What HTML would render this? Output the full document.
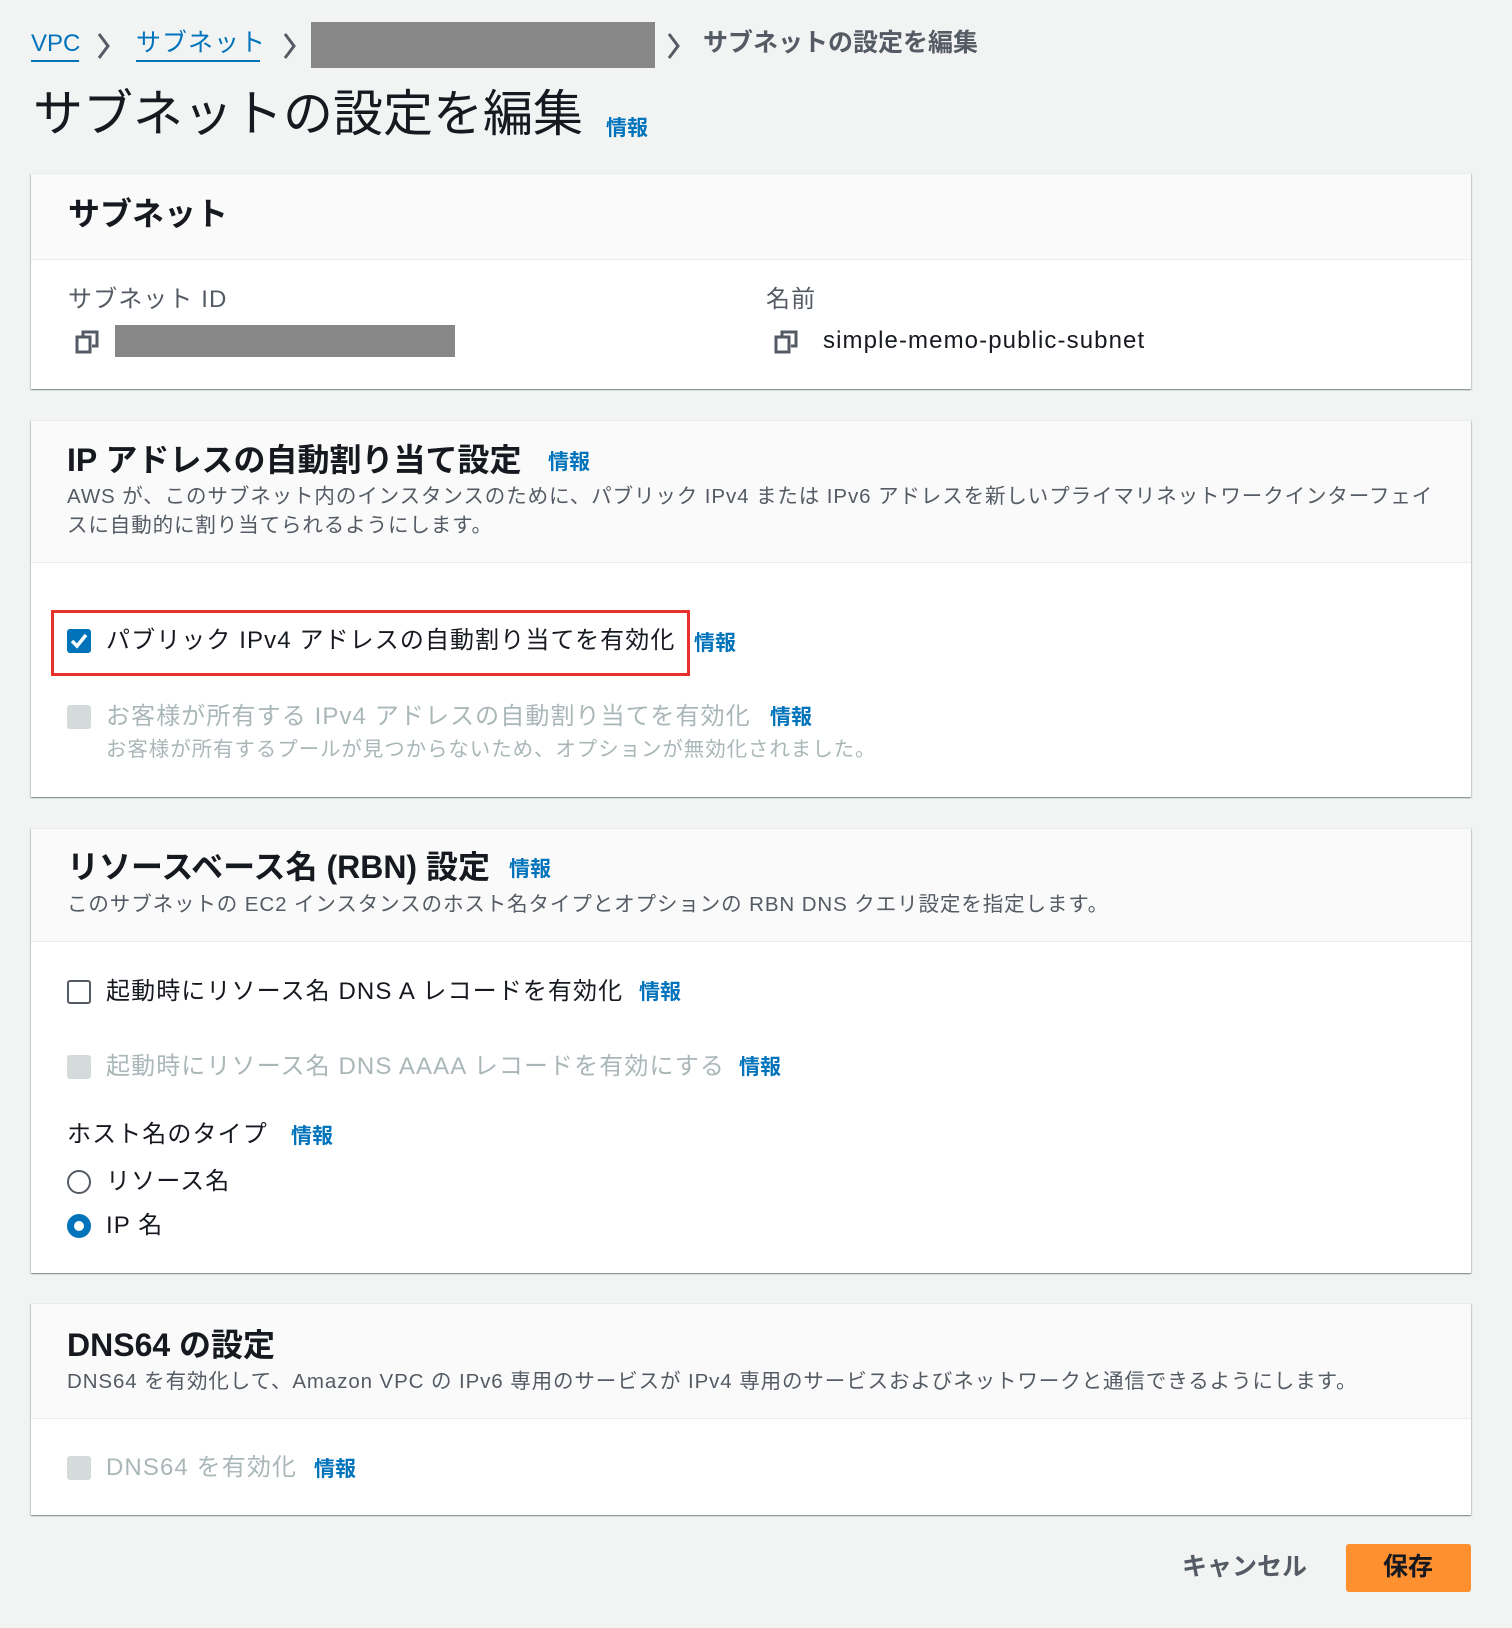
<!DOCTYPE html>
<html><head><meta charset="utf-8"><style>
*{margin:0;padding:0;box-sizing:border-box}
body{width:1512px;height:1628px;background:#f2f3f3;position:relative;overflow:hidden;font-family:"Liberation Sans","Noto Sans CJK JP",sans-serif;color:#16191f}
.t{position:absolute;white-space:nowrap;line-height:1}
.lk{color:#0073bb;font-weight:bold;font-size:21px}
.panel{position:absolute;left:31px;width:1440px;background:#fff;box-shadow:0 1px 1px 0 rgba(0,28,36,.3),1px 1px 1px 0 rgba(0,28,36,.15),-1px 1px 1px 0 rgba(0,28,36,.15);border-top:1px solid #eaeded}
.hd{position:absolute;left:0;top:0;width:100%;background:#fafafa;border-bottom:1px solid #eaeded}
.cb{position:absolute;width:24px;height:24px;border-radius:3px}
.h2{font-size:32px;font-weight:bold}
.desc{font-size:20.5px;color:#545b64;letter-spacing:0.9px}
.b{font-size:24px;letter-spacing:1.1px}
.dis{color:#aab7b8}
.gray{position:absolute;background:#878787}
</style></head><body>
<div class="t" style="left:31px;top:32px;font-size:24px;color:#0073bb">VPC</div>
<div style="position:absolute;left:31px;top:60px;width:48px;height:2px;background:#0073bb"></div>
<svg style="position:absolute;left:96px;top:31px" width="16" height="30"><path d="M3 3 L12 15 L3 27" stroke="#545b64" stroke-width="3" fill="none"/></svg>
<div class="t" style="left:136px;top:31px;font-size:25px;color:#0073bb;letter-spacing:1px">サブネット</div>
<div style="position:absolute;left:136px;top:60px;width:124px;height:2px;background:#0073bb"></div>
<svg style="position:absolute;left:282px;top:31px" width="16" height="30"><path d="M3 3 L12 15 L3 27" stroke="#545b64" stroke-width="3" fill="none"/></svg>
<div class="gray" style="left:311px;top:22px;width:344px;height:46px"></div>
<svg style="position:absolute;left:666px;top:31px" width="16" height="30"><path d="M3 3 L12 15 L3 27" stroke="#545b64" stroke-width="3" fill="none"/></svg>
<div class="t" style="left:703px;top:31px;font-size:25px;color:#545b64;font-weight:bold">サブネットの設定を編集</div>
<div class="t" style="left:33px;top:89px;font-size:50px">サブネットの設定を編集</div>
<div class="t lk" style="left:606px;top:118px">情報</div>

<div class="panel" style="top:173px;height:216px">
 <div class="hd" style="height:86px"></div>
 <div class="t" style="left:37px;top:24px;font-size:32px;font-weight:bold">サブネット</div>
 <div class="t b" style="left:37px;top:114px;color:#545b64">サブネット ID</div>
 <svg style="position:absolute;left:44px;top:155px" width="26" height="26"><rect x="2" y="8" width="13" height="15" fill="none" stroke="#545b64" stroke-width="3"/><path d="M8 7 V3 H22 V17 H17" fill="none" stroke="#545b64" stroke-width="3"/></svg>
 <div class="gray" style="left:84px;top:151px;width:340px;height:32px"></div>
 <div class="t b" style="left:735px;top:114px;color:#545b64">名前</div>
 <svg style="position:absolute;left:743px;top:155px" width="26" height="26"><rect x="2" y="8" width="13" height="15" fill="none" stroke="#545b64" stroke-width="3"/><path d="M8 7 V3 H22 V17 H17" fill="none" stroke="#545b64" stroke-width="3"/></svg>
 <div class="t b" style="left:792px;top:155px">simple-memo-public-subnet</div>
</div>

<div class="panel" style="top:420px;height:377px">
 <div class="hd" style="height:142px"></div>
 <div class="t h2" style="left:36px;top:23px">IP アドレスの自動割り当て設定</div>
 <div class="t lk" style="left:517px;top:31px">情報</div>
 <div class="t desc" style="left:36px;top:66px">AWS が、このサブネット内のインスタンスのために、パブリック IPv4 または IPv6 アドレスを新しいプライマリネットワークインターフェイ</div>
 <div class="t desc" style="left:36px;top:95px">スに自動的に割り当てられるようにします。</div>
 <div style="position:absolute;left:20px;top:189px;width:639px;height:66px;border:3px solid #e8312a"></div>
 <div class="cb" style="left:36px;top:208px;background:#0073bb"><svg width="24" height="24"><path d="M5 12 L10 17 L19 6" stroke="#fff" stroke-width="3.5" fill="none"/></svg></div>
 <div class="t b" style="left:75px;top:208px">パブリック IPv4 アドレスの自動割り当てを有効化</div>
 <div class="t lk" style="left:663px;top:212px">情報</div>
 <div class="cb" style="left:36px;top:284px;background:#d5dbdb"></div>
 <div class="t b dis" style="left:75px;top:284px">お客様が所有する IPv4 アドレスの自動割り当てを有効化</div>
 <div class="t lk" style="left:739px;top:286px">情報</div>
 <div class="t dis" style="left:75px;top:319px;font-size:20.5px;letter-spacing:0.9px">お客様が所有するプールが見つからないため、オプションが無効化されました。</div>
</div>

<div class="panel" style="top:828px;height:445px">
 <div class="hd" style="height:113px"></div>
 <div class="t h2" style="left:36px;top:22px">リソースベース名 (RBN) 設定</div>
 <div class="t lk" style="left:478px;top:30px">情報</div>
 <div class="t desc" style="left:36px;top:66px">このサブネットの EC2 インスタンスのホスト名タイプとオプションの RBN DNS クエリ設定を指定します。</div>
 <div class="cb" style="left:36px;top:151px;border:2px solid #545b64"></div>
 <div class="t b" style="left:75px;top:151px">起動時にリソース名 DNS A レコードを有効化</div>
 <div class="t lk" style="left:608px;top:153px">情報</div>
 <div class="cb" style="left:36px;top:226px;background:#d5dbdb"></div>
 <div class="t b dis" style="left:75px;top:226px">起動時にリソース名 DNS AAAA レコードを有効にする</div>
 <div class="t lk" style="left:708px;top:228px">情報</div>
 <div class="t b" style="left:36px;top:294px">ホスト名のタイプ</div>
 <div class="t lk" style="left:260px;top:297px">情報</div>
 <div style="position:absolute;left:36px;top:341px;width:24px;height:24px;border:2px solid #545b64;border-radius:50%"></div>
 <div class="t b" style="left:75px;top:341px">リソース名</div>
 <div style="position:absolute;left:36px;top:385px;width:24px;height:24px;border:7px solid #0073bb;border-radius:50%"></div>
 <div class="t b" style="left:75px;top:385px">IP 名</div>
</div>

<div class="panel" style="top:1303px;height:212px">
 <div class="hd" style="height:115px"></div>
 <div class="t h2" style="left:36px;top:25px">DNS64 の設定</div>
 <div class="t desc" style="left:36px;top:68px">DNS64 を有効化して、Amazon VPC の IPv6 専用のサービスが IPv4 専用のサービスおよびネットワークと通信できるようにします。</div>
 <div class="cb" style="left:36px;top:152px;background:#d5dbdb"></div>
 <div class="t b dis" style="left:75px;top:152px">DNS64 を有効化</div>
 <div class="t lk" style="left:283px;top:155px">情報</div>
</div>

<div class="t" style="left:1182px;top:1555px;font-size:25px;font-weight:bold;color:#545b64">キャンセル</div>
<div style="position:absolute;left:1346px;top:1544px;width:125px;height:48px;background:#ff9030;border-radius:3px"></div>
<div class="t" style="left:1383px;top:1555px;font-size:25px;font-weight:bold;color:#16191f">保存</div>
</body></html>
